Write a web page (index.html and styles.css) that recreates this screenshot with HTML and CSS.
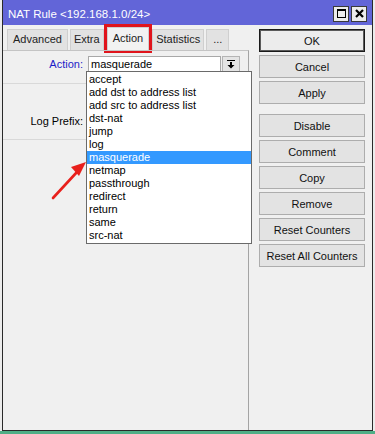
FILE: index.html
```html
<!DOCTYPE html>
<html lang="en">
<head>
    <meta charset="UTF-8">
    <meta name="viewport" content="width=device-width, initial-scale=1.0">
    <title>NAT Rule</title>
    <link rel="stylesheet" href="styles.css">
</head>
<body>
    <div class="window">
        <div class="titlebar">
            <span class="title">NAT Rule &lt;192.168.1.0/24&gt;</span>
            <div class="title-btns">
                <span class="tbtn"><span class="max-box"></span></span>
                <span class="tbtn close">
                    <svg width="9" height="9" viewBox="0 0 9 9"><path d="M1 1 L8 8 M8 1 L1 8" stroke="#000" stroke-width="2.2"/></svg>
                </span>
            </div>
        </div>

        <div class="content">
            <div class="left">
                <div class="tabs">
                    <div class="tab tab-wide">Advanced</div>
                    <div class="tab">Extra</div>
                    <div class="tab active">Action</div>
                    <div class="tab">Statistics</div>
                    <div class="tab tab-more">...</div>
                </div>

                <div class="panel">
                    <div class="row row-action">
                        <label class="field-label blue">Action:</label>
                        <div class="combo">
                            <div class="combo-value">masquerade</div>
                            <div class="combo-btn">
                                <svg width="8" height="9" viewBox="0 0 8 9"><path d="M0 0.5 H8" stroke="#000"/><path d="M3 2 H5 V5 H7.5 L4 8.5 L0.5 5 H3 Z" fill="#000"/></svg>
                            </div>
                            <ul class="dropdown">
                                <li>accept</li>
                                <li>add dst to address list</li>
                                <li>add src to address list</li>
                                <li>dst-nat</li>
                                <li>jump</li>
                                <li>log</li>
                                <li class="selected">masquerade</li>
                                <li>netmap</li>
                                <li>passthrough</li>
                                <li>redirect</li>
                                <li>return</li>
                                <li>same</li>
                                <li>src-nat</li>
                            </ul>
                        </div>
                    </div>
                    <div class="row row-log">
                        <label class="field-label">Log Prefix:</label>
                    </div>
                </div>
            </div>

            <div class="buttons">
                <button class="btn default">OK</button>
                <button class="btn">Cancel</button>
                <button class="btn">Apply</button>
                <button class="btn spaced">Disable</button>
                <button class="btn">Comment</button>
                <button class="btn">Copy</button>
                <button class="btn">Remove</button>
                <button class="btn">Reset Counters</button>
                <button class="btn">Reset All Counters</button>
            </div>
        </div>
    </div>
    <div class="desktop-strip"></div>

    <svg class="arrow" width="60" height="60" viewBox="0 0 60 60">
        <path d="M6 52 L30 26" stroke="#e8201c" stroke-width="2.6" stroke-linecap="round"/>
        <path d="M39 16 L24 21 L32 30 Z" fill="#e8201c"/>
    </svg>
</body>
</html>
```

FILE: styles.css
```css
/* Page */
body {
    margin: 0;
    width: 375px;
    height: 434px;
    overflow: hidden;
    background-color: #ececec;
    font-family: "Liberation Sans", Arial, sans-serif;
    font-size: 11px;
    color: #000;
    position: relative;
}

/* Window frame */
.window {
    margin-left: 2px;
    width: 371px;
    height: 431px;
    box-sizing: border-box;
    background: #f0f0f0;
    border: 1px solid #2a2a2a;
    border-top: none;
    display: flex;
    flex-direction: column;
}

.titlebar {
    height: 25px;
    background: #6265d8;
    display: flex;
    align-items: center;
    justify-content: space-between;
    padding: 0 5px 0 5px;
}

.title {
    color: #fff;
    font-size: 11.5px;
    padding-top: 2px;
}

.title-btns {
    display: flex;
    gap: 2px;
    padding-top: 2px;
}

.tbtn {
    width: 14px;
    height: 14px;
    background: #ececec;
    border: 1px solid #3a3a3a;
    display: flex;
    align-items: center;
    justify-content: center;
}

.max-box {
    width: 7px;
    height: 6px;
    border: 1px solid #000;
    border-top-width: 2px;
}

/* Main area */
.content {
    flex: 1;
    display: flex;
}

.left {
    width: 246px;
    display: flex;
    flex-direction: column;
}

/* Tabs */
.tabs {
    height: 25px;
    display: flex;
    align-items: flex-end;
    gap: 2px;
    padding-left: 4px;
}

.tab {
    height: 20px;
    line-height: 19px;
    padding: 0 3px;
    background: #e2e2e2;
    border: 1px solid #cfcfcf;
    border-bottom: none;
    color: #222;
}

.tab-wide {
    padding: 0 5px;
}

.tab-more {
    padding: 0 6px;
}

.tab.active {
    height: 22px;
    line-height: 20px;
    padding: 0 5px;
    background: #f2f2f2;
    outline: 3px solid #e0141c;
    margin: 0 1px;
}

/* Tab body */
.panel {
    flex: 1;
    border-top: 1px solid #c4c4c4;
    border-right: 1px solid #a4a4a4;
}

.row {
    display: flex;
    border-bottom: 1px solid #d9d9d9;
}

.row-action {
    height: 33px;
    padding-top: 5px;
    box-sizing: border-box;
    align-items: flex-start;
}

.row-log {
    height: 56px;
    align-items: flex-end;
    padding-bottom: 10px;
    box-sizing: border-box;
}

.field-label {
    width: 80px;
    text-align: right;
    margin-right: 5px;
    line-height: 16px;
}

.blue {
    color: #1c1cc8;
}

/* Combo box */
.combo {
    position: relative;
    display: flex;
    gap: 1px;
}

.combo-value {
    width: 129px;
    height: 14px;
    line-height: 14px;
    padding-left: 2px;
    background: #fff;
    border: 1px solid #a8a8a8;
}

.combo-btn {
    width: 16px;
    height: 14px;
    background: #e4e4e4;
    border: 1px solid #b4b4b4;
    display: flex;
    align-items: center;
    justify-content: center;
}

.dropdown {
    position: absolute;
    top: 15px;
    left: -2px;
    width: 164px;
    margin: 0;
    padding: 1px 0;
    list-style: none;
    background: #fff;
    border: 1px solid #6a6a6a;
    z-index: 2;
}

.dropdown li {
    height: 13px;
    line-height: 13px;
    padding-left: 2px;
}

.dropdown li.selected {
    background: #3399ff;
    color: #fff;
}

/* Buttons */
.buttons {
    display: flex;
    flex-direction: column;
    gap: 3px;
    padding: 4px 0 0 10px;
}

.btn {
    width: 106px;
    height: 23px;
    padding: 0;
    font-family: inherit;
    font-size: 11px;
    color: #111;
    background: #e3e3e3;
    border: 1px solid #adadad;
}

.btn.default {
    border: 1px solid #1a1a1a;
    box-shadow: inset 0 0 0 1px #5a5a5a;
    background: #ececec;
}

.btn.spaced {
    margin-top: 7px;
}

.desktop-strip {
    height: 3px;
    background: #4fae86;
}

/* Red pointer arrow */
.arrow {
    position: absolute;
    left: 47px;
    top: 146px;
}
```
